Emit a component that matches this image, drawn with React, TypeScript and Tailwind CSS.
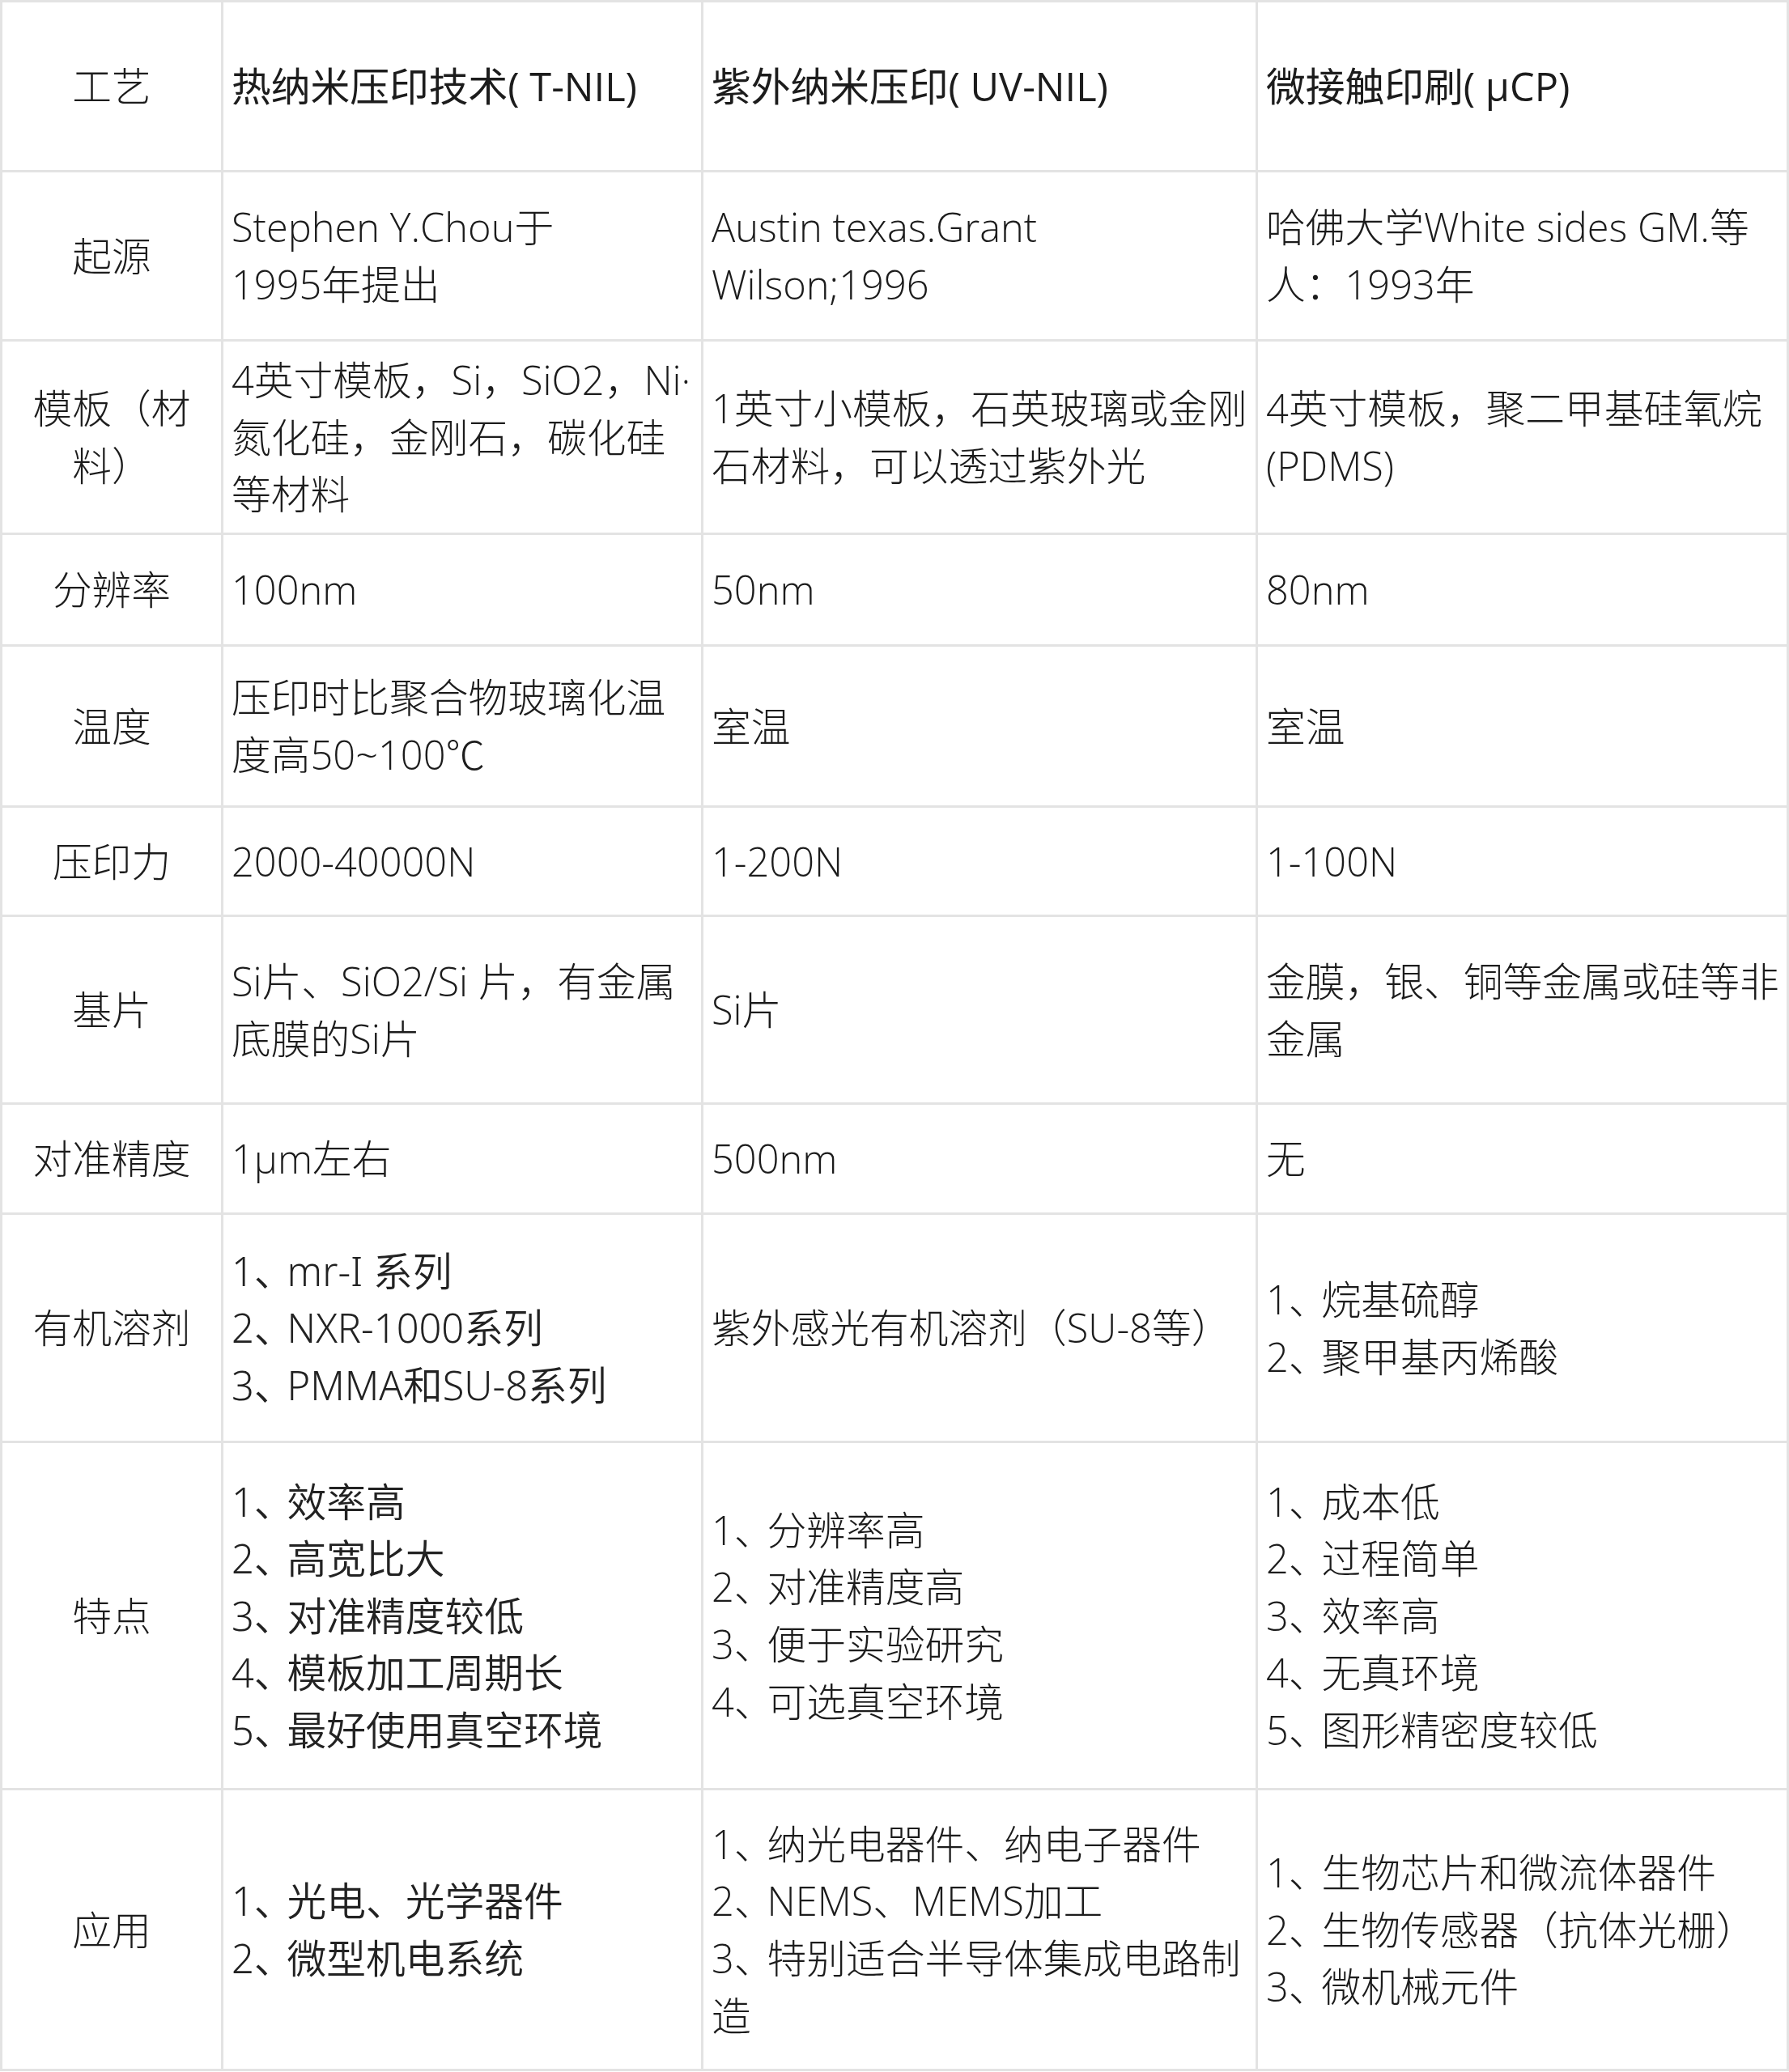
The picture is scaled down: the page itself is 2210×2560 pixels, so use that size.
import React from "react";

type Line = string;
type Row = {
  h: number;
  label: Line[];
  c2: Line[];
  c3: Line[];
  c4: Line[];
  alt2?: boolean;
};

const rows: Row[] = [
  {
    h: 209,
    label: ["起源"],
    c2: ["Stephen Y.Chou于", "1995年提出"],
    c3: ["Austin texas.Grant", "Wilson;1996"],
    c4: ["哈佛大学White sides GM.等", "人：1993年"],
  },
  {
    h: 239,
    label: ["模板（材", "料）"],
    c2: ["4英寸模板，Si，SiO2，Ni·", "氮化硅，金刚石，碳化硅", "等材料"],
    c3: ["1英寸小模板，石英玻璃或金刚", "石材料，可以透过紫外光"],
    c4: ["4英寸模板，聚二甲基硅氧烷", "(PDMS)"],
  },
  { h: 138, label: ["分辨率"], c2: ["100nm"], c3: ["50nm"], c4: ["80nm"] },
  {
    h: 199,
    label: ["温度"],
    c2: ["压印时比聚合物玻璃化温", "度高50~100℃"],
    c3: ["室温"],
    c4: ["室温"],
  },
  { h: 135, label: ["压印力"], c2: ["2000-40000N"], c3: ["1-200N"], c4: ["1-100N"] },
  {
    h: 232,
    label: ["基片"],
    c2: ["Si片、SiO2/Si 片，有金属", "底膜的Si片"],
    c3: ["Si片"],
    c4: ["金膜，银、铜等金属或硅等非", "金属"],
  },
  { h: 136, label: ["对准精度"], c2: ["1μm左右"], c3: ["500nm"], c4: ["无"] },
  {
    h: 282,
    label: ["有机溶剂"],
    alt2: true,
    c2: ["1、mr-I 系列", "2、NXR-1000系列", "3、PMMA和SU-8系列"],
    c3: ["紫外感光有机溶剂（SU-8等）"],
    c4: ["1、烷基硫醇", "2、聚甲基丙烯酸"],
  },
  {
    h: 429,
    label: ["特点"],
    alt2: true,
    c2: ["1、效率高", "2、高宽比大", "3、对准精度较低", "4、模板加工周期长", "5、最好使用真空环境"],
    c3: ["1、分辨率高", "2、对准精度高", "3、便于实验研究", "4、可选真空环境"],
    c4: ["1、成本低", "2、过程简单", "3、效率高", "4、无真环境", "5、图形精密度较低"],
  },
  {
    h: 347,
    label: ["应用"],
    alt2: true,
    c2: ["1、光电、光学器件", "2、微型机电系统"],
    c3: ["1、纳光电器件、纳电子器件", "2、NEMS、MEMS加工", "3、特别适合半导体集成电路制", "造"],
    c4: ["1、生物芯片和微流体器件", "2、生物传感器（抗体光栅）", "3、微机械元件"],
  },
];

function Lines({ lines }: { lines: Line[] }) {
  return (
    <>
      {lines.map((l, i) => {
        const m = l.match(/^(\d)、(.*)$/);
        return (
          <div key={i} className="whitespace-nowrap">
            {m ? (
              <>
                {m[1]}
                <span className="tracking-[-8px]">、</span>
                {m[2]}
              </>
            ) : (
              l
            )}
          </div>
        );
      })}
    </>
  );
}

const cellBase =
  "border-[3px] border-[#e3e3e3] align-middle overflow-hidden text-left pl-[10px] pr-0 py-0";
const labelCell =
  "border-[3px] border-[#e3e3e3] align-middle overflow-hidden text-center p-0";

export default function App() {
  return (
    <div className="bg-white w-[2210px] min-h-[2560px]">
      <table
        className="border-collapse table-fixed w-[2207px] text-[48.75px] leading-[70.6px] text-[#1c1c1c] font-light"
        style={{ fontFamily: '"Open Sans", "Noto Sans CJK SC", sans-serif' }}
      >
        <colgroup>
          <col className="w-[273px]" />
          <col className="w-[593px]" />
          <col className="w-[685px]" />
          <col className="w-[656px]" />
        </colgroup>
        <tbody>
          <tr className="h-[210px]">
            <td className={labelCell}>工艺</td>
            <td className={cellBase + " font-normal"}>热纳米压印技术( T-NIL)</td>
            <td className={cellBase + " font-normal"}>紫外纳米压印( UV-NIL)</td>
            <td className={cellBase + " font-normal"}>微接触印刷( μCP)</td>
          </tr>
          {rows.map((r, i) => (
            <tr key={i} style={{ height: r.h }}>
              <td className={labelCell}>
                <Lines lines={r.label} />
              </td>
              <td
                className={cellBase + (r.alt2 ? " font-[350] text-[#222]" : "")}
                style={r.alt2 ? { fontFamily: '"Noto Sans", "Noto Sans CJK SC", sans-serif' } : undefined}
              >
                <Lines lines={r.c2} />
              </td>
              <td className={cellBase}>
                <Lines lines={r.c3} />
              </td>
              <td className={cellBase}>
                <Lines lines={r.c4} />
              </td>
            </tr>
          ))}
        </tbody>
      </table>
    </div>
  );
}
